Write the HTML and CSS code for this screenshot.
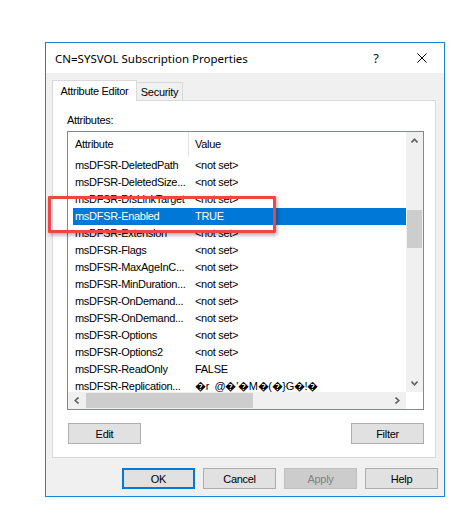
FILE: index.html
```html
<!DOCTYPE html>
<html>
<head>
<meta charset="utf-8">
<link rel="stylesheet" href="styles.css">
</head>
<body>
<div class="window">
  <div class="titlebar">
    <span class="title">CN=SYSVOL Subscription Properties</span>
    <span class="tbtn help">?</span>
    <span class="tbtn close"><svg width="10" height="10" viewBox="0 0 10 10"><path d="M0.5 0.5 L9.5 9.5 M9.5 0.5 L0.5 9.5" stroke="#000" stroke-width="1" fill="none"/></svg></span>
  </div>
  <div class="client">
    <div class="tabs">
      <div class="tab active">Attribute Editor</div>
      <div class="tab second">Security</div>
    </div>
    <div class="panel">
      <div class="label">Attributes:</div>
      <div class="listbox">
        <div class="view">
          <div class="header">
            <div class="hcell hc1">Attribute</div>
            <div class="hcell hc2">Value</div>
          </div>
          <div class="row"><div class="c1">msDFSR-DeletedPath</div><div class="c2">&lt;not set&gt;</div></div>
          <div class="row"><div class="c1">msDFSR-DeletedSize...</div><div class="c2">&lt;not set&gt;</div></div>
          <div class="row"><div class="c1">msDFSR-DfsLinkTarget</div><div class="c2">&lt;not set&gt;</div></div>
          <div class="row selected"><div class="c1">msDFSR-Enabled</div><div class="c2">TRUE</div></div>
          <div class="row"><div class="c1">msDFSR-Extension</div><div class="c2">&lt;not set&gt;</div></div>
          <div class="row"><div class="c1">msDFSR-Flags</div><div class="c2">&lt;not set&gt;</div></div>
          <div class="row"><div class="c1">msDFSR-MaxAgeInC...</div><div class="c2">&lt;not set&gt;</div></div>
          <div class="row"><div class="c1">msDFSR-MinDuration...</div><div class="c2">&lt;not set&gt;</div></div>
          <div class="row"><div class="c1">msDFSR-OnDemand...</div><div class="c2">&lt;not set&gt;</div></div>
          <div class="row"><div class="c1">msDFSR-OnDemand...</div><div class="c2">&lt;not set&gt;</div></div>
          <div class="row"><div class="c1">msDFSR-Options</div><div class="c2">&lt;not set&gt;</div></div>
          <div class="row"><div class="c1">msDFSR-Options2</div><div class="c2">&lt;not set&gt;</div></div>
          <div class="row"><div class="c1">msDFSR-ReadOnly</div><div class="c2">FALSE</div></div>
          <div class="row"><div class="c1">msDFSR-Replication...</div><div class="c2">&#xFFFD;r&nbsp; @&#xFFFD;'&#xFFFD;M&#xFFFD;(&#xFFFD;}G&#xFFFD;!&#xFFFD;</div></div>
        </div>
        <div class="vscroll">
          <div class="arrow"><svg width="7" height="5" viewBox="0 0 7 5"><path d="M0.5 4.5 L3.5 1.2 L6.5 4.5" stroke="#606060" stroke-width="1.6" fill="none"/></svg></div>
          <div class="vtrack"><div class="vthumb"></div></div>
          <div class="arrow"><svg width="7" height="5" viewBox="0 0 7 5"><path d="M0.5 0.5 L3.5 3.8 L6.5 0.5" stroke="#606060" stroke-width="1.6" fill="none"/></svg></div>
        </div>
        <div class="hscroll">
          <div class="arrow"><svg width="5" height="7" viewBox="0 0 5 7"><path d="M4.5 0.5 L1.2 3.5 L4.5 6.5" stroke="#606060" stroke-width="1.6" fill="none"/></svg></div>
          <div class="htrack"><div class="hthumb"></div></div>
          <div class="arrow"><svg width="5" height="7" viewBox="0 0 5 7"><path d="M0.5 0.5 L3.8 3.5 L0.5 6.5" stroke="#606060" stroke-width="1.6" fill="none"/></svg></div>
        </div>
        <div class="corner"></div>
      </div>
      <div class="panel-buttons">
        <button class="btn edit">Edit</button>
        <button class="btn">Filter</button>
      </div>
    </div>
    <div class="dialog-buttons">
      <button class="btn default">OK</button>
      <button class="btn">Cancel</button>
      <button class="btn disabled">Apply</button>
      <button class="btn">Help</button>
    </div>
  </div>
</div>
<div class="highlight"></div>
</body>
</html>
```
FILE: styles.css
```css
html, body {
  margin: 0;
  background: #ffffff;
}
body {
  position: relative;
  width: 471px;
  height: 526px;
  box-sizing: border-box;
  padding: 42px 0 0 45px;
  overflow: hidden;
  font-family: "Liberation Sans", Arial, sans-serif;
  font-size: 11px;
  letter-spacing: -0.3px;
  color: #000;
}
.window {
  box-sizing: border-box;
  width: 400px;
  height: 455px;
  border: 1px solid #1883d7;
  background: #f0f0f0;
  display: flex;
  flex-direction: column;
}
.titlebar {
  height: 30px;
  flex: none;
  background: #fff;
  display: flex;
  align-items: center;
  padding-left: 9px;
}
.title {
  flex: 1;
  font-family: "Noto Sans", "Open Sans", sans-serif;
  font-size: 11.5px;
  letter-spacing: 0;
  color: #000;
}
.tbtn {
  width: 46px;
  height: 30px;
  display: flex;
  align-items: center;
  justify-content: center;
}
.help {
  font-family: "Noto Sans", sans-serif;
  font-size: 13px;
  letter-spacing: 0;
  color: #111;
}
.close {
  width: 45px;
}
.client {
  flex: 1;
  padding: 7px 0 0 6px;
}
.tabs {
  display: flex;
  align-items: flex-end;
  height: 20px;
  position: relative;
  z-index: 1;
}
.tab {
  box-sizing: border-box;
  height: 18px;
  border: 1px solid #d9d9d9;
  border-bottom: none;
  background: #f0f0f0;
  display: flex;
  align-items: center;
  justify-content: center;
}
.tab.active {
  width: 85px;
  height: 21px;
  margin-bottom: -1px;
  background: #fff;
}
.tab.second {
  width: 47px;
  margin-left: -1px;
  padding-top: 1px;
}
.panel {
  box-sizing: border-box;
  width: 384px;
  height: 358px;
  border: 1px solid #d9d9d9;
  background: #fff;
  padding-left: 14px;
}
.label {
  margin-top: 13px;
  height: 13px;
  line-height: 13px;
  margin-bottom: 4px;
}
.listbox {
  box-sizing: border-box;
  width: 357px;
  height: 279px;
  border: 1px solid #828790;
  display: grid;
  grid-template-columns: 338px 17px;
  grid-template-rows: 260px 17px;
}
.view {
  overflow: hidden;
  background: #fff;
}
.header {
  display: flex;
  height: 25px;
  line-height: 25px;
}
.hcell {
  box-sizing: border-box;
  white-space: nowrap;
}
.hc1 {
  width: 121px;
  padding-left: 7px;
  border-right: 1px solid #e5e5e5;
}
.hc2 {
  padding-left: 6px;
}
.row {
  display: flex;
  height: 17px;
  line-height: 17px;
  margin-left: 5px;
  white-space: nowrap;
}
.row .c1 {
  width: 120px;
  box-sizing: border-box;
  padding-left: 2px;
  overflow: hidden;
}
.row .c2 {
  padding-left: 2px;
}
.row.selected {
  background: #0078d7;
  color: #fff;
}
.vscroll {
  background: #f0f0f0;
  display: flex;
  flex-direction: column;
}
.arrow {
  width: 17px;
  height: 17px;
  flex: none;
  display: flex;
  align-items: center;
  justify-content: center;
}
.vtrack {
  flex: 1;
}
.vthumb {
  margin: 61px 1px 0 1px;
  height: 38px;
  background: #cdcdcd;
}
.hscroll {
  background: #f0f0f0;
  display: flex;
}
.htrack {
  flex: 1;
}
.hthumb {
  margin: 1px 0 0 1px;
  width: 167px;
  height: 15px;
  background: #cdcdcd;
}
.corner {
  background: #fff;
}
.panel-buttons {
  margin-top: 13px;
  width: 357px;
  display: flex;
  justify-content: space-between;
}
.btn {
  box-sizing: border-box;
  width: 73px;
  height: 21px;
  margin: 0;
  padding: 0;
  background: #e1e1e1;
  border: 1px solid #adadad;
  border-radius: 0;
  font-family: "Liberation Sans", Arial, sans-serif;
  font-size: 11px;
  letter-spacing: -0.3px;
  color: #000;
}
.btn.edit {
  margin-left: 1px;
}
.dialog-buttons {
  margin-top: 10px;
  display: flex;
  justify-content: flex-end;
  gap: 8px;
  padding-right: 6px;
}
.btn.default {
  border: 2px solid #0078d7;
}
.btn.disabled {
  background: #cccccc;
  border-color: #bfbfbf;
  color: #838383;
}
.highlight {
  position: absolute;
  left: 48px;
  top: 196px;
  width: 228px;
  height: 37px;
  box-sizing: border-box;
  border: 3px solid #ec4646;
  border-radius: 1px;
  box-shadow: 1px 2px 4px rgba(0, 0, 0, 0.35);
}
```
